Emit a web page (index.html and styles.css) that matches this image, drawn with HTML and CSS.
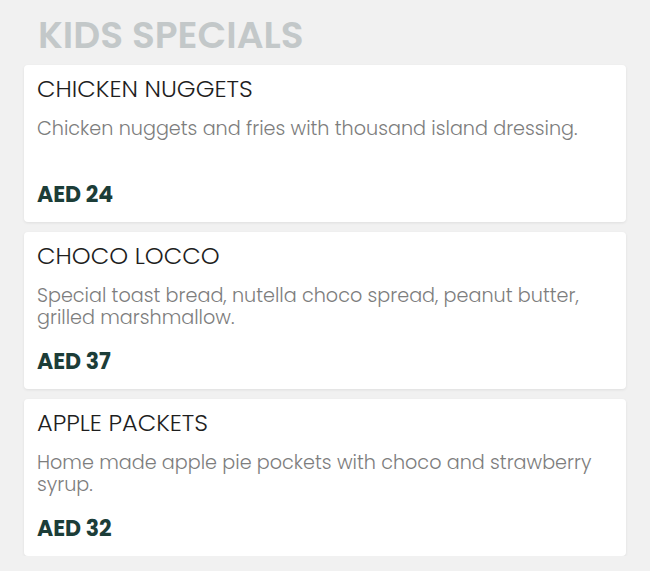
FILE: index.html
```html
<!DOCTYPE html>
<html>
<head>
<meta charset="utf-8">
<link rel="stylesheet" href="styles.css">
</head>
<body>
<main class="menu">
  <h1 class="section-title">KIDS SPECIALS</h1>
  <div class="items">
    <article class="card">
      <h2 class="card-title">CHICKEN NUGGETS</h2>
      <p class="card-desc">Chicken nuggets and fries with thousand island dressing.</p>
      <div class="card-price">AED 24</div>
    </article>
    <article class="card">
      <h2 class="card-title">CHOCO LOCCO</h2>
      <p class="card-desc">Special toast bread, nutella choco spread, peanut butter, grilled marshmallow.</p>
      <div class="card-price">AED 37</div>
    </article>
    <article class="card">
      <h2 class="card-title">APPLE PACKETS</h2>
      <p class="card-desc">Home made apple pie pockets with choco and strawberry syrup.</p>
      <div class="card-price">AED 32</div>
    </article>
  </div>
</main>
</body>
</html>
```
FILE: styles.css
```css
html, body {
  margin: 0;
  padding: 0;
  background: #f1f1f1;
}
body {
  font-family: "Poppins", "Open Sans", "Liberation Sans", sans-serif;
}
.menu {
  padding: 13px 24px 0 24px;
}
.section-title {
  margin: 0 0 8px 14px;
  font-size: 37.5px;
  line-height: 44px;
  font-weight: 600;
  color: #c3c8c9;
}
.items {
  display: flex;
  flex-direction: column;
  gap: 10px;
}
.card {
  background: #fff;
  border-radius: 4px;
  box-shadow: 0 1px 3px rgba(0,0,0,0.08);
  height: 157px;
  box-sizing: border-box;
  padding: 9px 13px 14px 13px;
  display: flex;
  flex-direction: column;
}
.card-title {
  margin: 0;
  font-size: 24px;
  line-height: 30px;
  font-weight: 300;
  color: #1e1e1e;
}
.card-desc {
  margin: 14px 0 0 0;
  font-size: 19.2px;
  line-height: 22px;
  font-weight: 300;
  color: #7d7d7d;
}
.card-price {
  margin-top: auto;
  font-size: 22px;
  line-height: 26px;
  font-weight: 700;
  color: #1c3d38;
}
```
